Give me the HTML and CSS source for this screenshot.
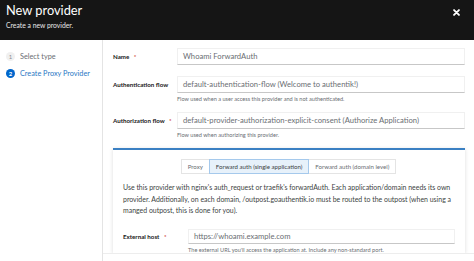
FILE: index.html
```html
<!DOCTYPE html>
<html lang="en">
<head>
    <meta charset="UTF-8">
    <meta name="viewport" content="width=device-width, initial-scale=1.0">
    <title>New provider</title>
    <link rel="stylesheet" href="styles.css">
</head>
<body>
    <div class="modal">
        <header class="modal-header">
            <div class="header-text">
                <h1>New provider</h1>
                <p>Create a new provider.</p>
            </div>
            <button class="close-button" aria-label="Close">
                <svg width="7" height="7" viewBox="0 0 10 10">
                    <path d="M1.5 1.5 L8.5 8.5 M8.5 1.5 L1.5 8.5" stroke="#fff" stroke-width="2.6" stroke-linecap="round"/>
                </svg>
            </button>
        </header>

        <div class="wizard">
            <nav class="wizard-nav">
                <div class="step">
                    <span class="step-num">1</span>
                    <span>Select type</span>
                </div>
                <div class="step current">
                    <span class="step-num">2</span>
                    <span>Create Proxy Provider</span>
                </div>
            </nav>

            <main class="wizard-main">
                <div class="form-row">
                    <label class="form-label">Name <span class="req">*</span></label>
                    <div class="form-control">
                        <div class="input">Whoami ForwardAuth</div>
                    </div>
                </div>

                <div class="form-row">
                    <label class="form-label">Authentication flow</label>
                    <div class="form-control">
                        <div class="input">default-authentication-flow (Welcome to authentik!)</div>
                        <p class="helper">Flow used when a user access this provider and is not authenticated.</p>
                    </div>
                </div>

                <div class="form-row">
                    <label class="form-label">Authorization flow <span class="req">*</span></label>
                    <div class="form-control">
                        <div class="input">default-provider-authorization-explicit-consent (Authorize Application)</div>
                        <p class="helper">Flow used when authorizing this provider.</p>
                    </div>
                </div>

                <section class="card">
                    <div class="toggle-group">
                        <button class="toggle">Proxy</button>
                        <button class="toggle selected">Forward auth (single application)</button>
                        <button class="toggle">Forward auth (domain level)</button>
                    </div>
                    <p class="card-text">Use this provider with nginx's auth_request or traefik's forwardAuth. Each application/domain needs its own provider. Additionally, on each domain, /outpost.goauthentik.io must be routed to the outpost (when using a manged outpost, this is done for you).</p>

                    <div class="form-row card-row">
                        <label class="form-label">External host <span class="req">*</span></label>
                        <div class="form-control">
                            <div class="input">https://whoami.example.com</div>
                            <p class="helper">The external URL you'll access the application at. Include any non-standard port.</p>
                        </div>
                    </div>
                </section>
            </main>
        </div>

        <footer class="wizard-footer"></footer>
    </div>
</body>
</html>
```

FILE: styles.css
```css
/* Base */
body {
    margin: 0;
    font-family: Lato, sans-serif;
    color: #151515;
    background-color: #fff;
    overflow: hidden;
}
.modal {
    display: flex;
    flex-direction: column;
    height: 261px;
    position: relative;
}

/* Header */
.modal-header {
    display: flex;
    justify-content: space-between;
    background-color: #151515;
    color: #fff;
    height: 40px;
    box-sizing: border-box;
    padding: 2px 14px 0 6px;
    flex-shrink: 0;
}
.modal-header h1 {
    margin: 0;
    font-size: 12.8px;
    font-weight: 400;
    line-height: 16px;
}
.modal-header p {
    margin: 3px 0 0 0;
    font-size: 6.8px;
    line-height: 8px;
    color: #e8e8e8;
}
.close-button {
    background: none;
    border: none;
    padding: 0;
    margin-top: 2px;
    height: 7px;
    cursor: pointer;
}

/* Wizard */
.wizard {
    display: flex;
    flex: 1;
    overflow: hidden;
}
.wizard-nav {
    width: 103px;
    border-right: 1px solid #e4e4e4;
    padding-top: 8px;
    flex-shrink: 0;
    box-sizing: border-box;
}
.step {
    display: flex;
    align-items: center;
    gap: 5px;
    padding-left: 6px;
    height: 17px;
    font-size: 7.3px;
    color: #6a6e73;
}
.step-num {
    width: 9px;
    height: 9px;
    border-radius: 50%;
    background-color: #f0f0f0;
    color: #8a8d90;
    font-size: 6px;
    display: flex;
    justify-content: center;
    align-items: center;
}
.step.current {
    color: #2b78c5;
}
.step.current .step-num {
    background-color: #0066cc;
    color: #fff;
    font-weight: 700;
}

.wizard-main {
    flex: 1;
    padding: 8px 9px 0 10px;
}

/* Form rows */
.form-row {
    display: flex;
    margin-bottom: 10px;
}
.form-row:first-child {
    margin-bottom: 11px;
}
.form-label {
    width: 64px;
    flex-shrink: 0;
    font-size: 6.2px;
    font-weight: 700;
    padding-top: 5px;
    line-height: 8px;
    color: #202020;
}
.req {
    color: #c9190b;
    font-weight: 400;
    margin-left: 3px;
}
.form-control {
    flex: 1;
}
.input {
    height: 17px;
    box-sizing: border-box;
    border: 1px solid #f0f0f0;
    border-bottom-color: #c7c7c7;
    padding: 0 5px;
    font-size: 7.65px;
    line-height: 15px;
    color: #6a6e73;
    white-space: nowrap;
    overflow: hidden;
}
.helper {
    margin: 2px 0 0 0;
    font-size: 5.6px;
    color: #6a6e73;
    line-height: 7px;
}

/* Card */
.card {
    border-top: 2px solid #3b80c3;
    box-shadow: 0 1px 4px rgba(3, 3, 3, 0.14);
    padding: 9px 10px 0 10px;
}
.toggle-group {
    display: flex;
    justify-content: center;
    margin-bottom: 8px;
}
.toggle {
    font-family: inherit;
    font-size: 6.1px;
    color: #6a6e73;
    background-color: #fff;
    border: 1px solid #e4e4e4;
    height: 15px;
    padding: 0 6px;
    margin-left: -1px;
}
.toggle.selected {
    background-color: #e7f1fa;
    border-color: #a5c9ec;
    color: #3c3f42;
    position: relative;
}
.card-text {
    margin: 0 0 12px 0;
    font-size: 6.95px;
    line-height: 11.5px;
    color: #3c3f42;
}
.card-row .form-label {
    width: 65px;
    padding-top: 4px;
}
.card-row .input {
    height: 15px;
    line-height: 13px;
}

/* Footer */
.wizard-footer {
    position: absolute;
    left: 103px;
    right: 0;
    bottom: 0;
    height: 7px;
    background-color: #fff;
    border-top: 1px solid #ededed;
}
```
